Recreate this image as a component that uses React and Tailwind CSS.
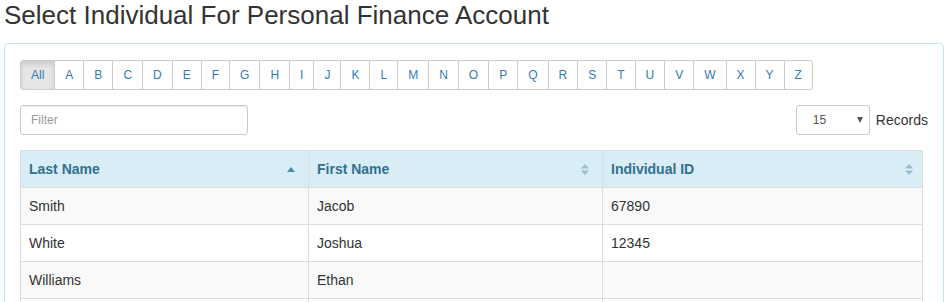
import { useState } from 'react';

const letters = ['All', 'A', 'B', 'C', 'D', 'E', 'F', 'G', 'H', 'I', 'J', 'K', 'L', 'M', 'N', 'O', 'P', 'Q', 'R', 'S', 'T', 'U', 'V', 'W', 'X', 'Y', 'Z'];

const rows = [
  { last: 'Smith', first: 'Jacob', id: '67890' },
  { last: 'White', first: 'Joshua', id: '12345' },
  { last: 'Williams', first: 'Ethan', id: '' },
  { last: '', first: '', id: '' },
];

const SortAsc = () => (
  <svg width="8" height="5" viewBox="0 0 8 5" className="shrink-0">
    <path d="M0 5 L4 0 L8 5 Z" fill="#4b88ad" />
  </svg>
);

const SortBoth = () => (
  <svg width="8" height="11" viewBox="0 0 8 11" className="shrink-0">
    <path d="M0 4.5 L4 0 L8 4.5 Z" fill="#9bbdd1" />
    <path d="M0 6.5 L4 11 L8 6.5 Z" fill="#9bbdd1" />
  </svg>
);

const App = () => {
  const [active, setActive] = useState('All');

  return (
    <div className="min-h-[302px] bg-white px-1 font-['Liberation_Sans',Arial,sans-serif] text-[14px] text-[#333]">
      <h3 className="pt-[1px] text-[26px] leading-[29px] text-[#333]">Select Individual For Personal Finance Account</h3>

      <div className="mt-[13px] rounded-[4px] border border-[#bce8f1] pl-[15px] pr-[15px] pt-[16px] pb-4">
        {/* letter filter */}
        <div className="flex">
          {letters.map((l, i) => (
            <button
              key={l}
              onClick={() => setActive(l)}
              className={
                'h-[30px] border border-[#ccc] px-[10px] text-[12px] leading-[18px] ' +
                (i > 0 ? '-ml-px ' : '') +
                (i === 0 ? 'rounded-l-[3px] ' : '') +
                (i === letters.length - 1 ? 'rounded-r-[3px] ' : '') +
                (active === l
                  ? 'relative z-10 border-[#adadad] bg-[#e6e6e6] text-[#337ab7] shadow-[inset_0_3px_5px_rgba(0,0,0,0.125)]'
                  : 'bg-white text-[#337ab7]')
              }
            >
              {l}
            </button>
          ))}
        </div>

        {/* filter + records */}
        <div className="mt-[15px] flex items-center justify-between">
          <input
            type="text"
            placeholder="Filter"
            className="h-[30px] w-[228px] rounded-[3px] border border-[#ccc] px-[10px] text-[12px] text-[#555] placeholder:text-[#999] shadow-[inset_0_1px_1px_rgba(0,0,0,0.075)] focus:outline-none"
          />
          <div className="flex items-center gap-[6px]">
            <div className="flex h-[30px] w-[74px] items-center justify-between rounded-[3px] border border-[#ccc] pl-[16px] pr-[6px] text-[12px] text-[#555]">
              <span>15</span>
              <svg width="6" height="6" viewBox="0 0 6 6">
                <path d="M0 0 L6 0 L3 6 Z" fill="#555" />
              </svg>
            </div>
            <span className="text-[14px] text-[#333]">Records</span>
          </div>
        </div>

        {/* table */}
        <table className="mt-[15px] w-[903px] table-fixed border-collapse text-[14px]">
          <colgroup>
            <col className="w-[288px]" />
            <col className="w-[294px]" />
            <col />
          </colgroup>
          <thead>
            <tr className="bg-[#d9edf7] text-[#31708f]">
              <th className="border border-[#ddd] px-2 py-2 text-left font-bold leading-5">
                <div className="flex items-center justify-between pr-[5px]">
                  <span>Last Name</span>
                  <SortAsc />
                </div>
              </th>
              <th className="border border-[#ddd] px-2 py-2 text-left font-bold leading-5">
                <div className="flex items-center justify-between pr-[5px]">
                  <span>First Name</span>
                  <SortBoth />
                </div>
              </th>
              <th className="border border-[#ddd] px-2 py-2 text-left font-bold leading-5">
                <div className="flex items-center justify-between pr-[1px]">
                  <span>Individual ID</span>
                  <SortBoth />
                </div>
              </th>
            </tr>
          </thead>
          <tbody>
            {rows.map((r, i) => (
              <tr key={i} className={i % 2 === 0 ? 'bg-[#f9f9f9]' : 'bg-white'}>
                <td className="h-[37px] border border-[#ddd] px-2 py-2 leading-5">{r.last}</td>
                <td className="h-[37px] border border-[#ddd] px-2 py-2 leading-5">{r.first}</td>
                <td className="h-[37px] border border-[#ddd] px-2 py-2 leading-5">{r.id}</td>
              </tr>
            ))}
          </tbody>
        </table>
      </div>
    </div>
  );
};

export default App;
